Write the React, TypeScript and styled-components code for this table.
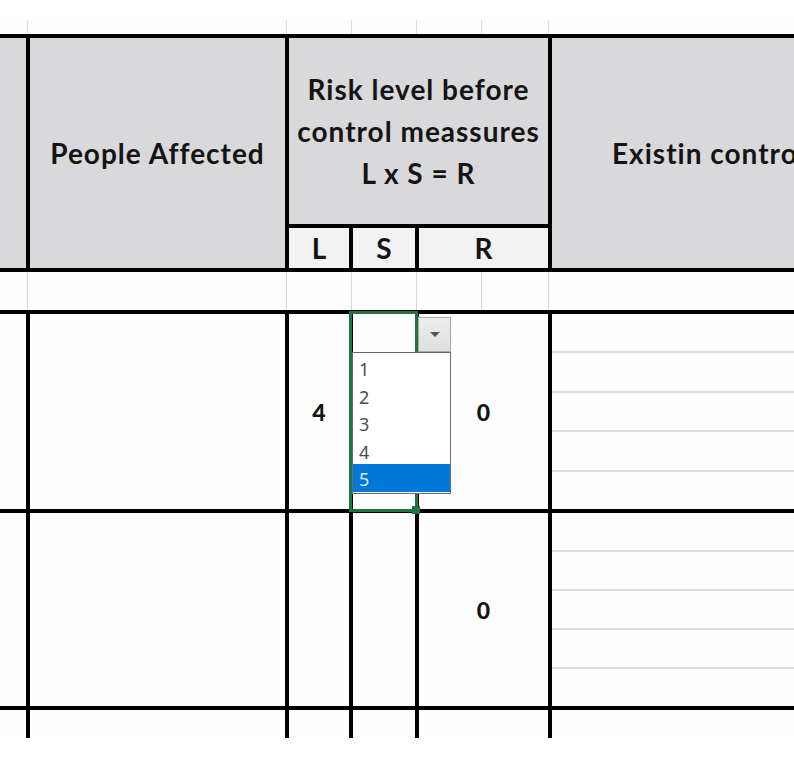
import React from "react";
import styled, { createGlobalStyle } from "styled-components";

const GlobalStyle = createGlobalStyle`
  html, body {
    margin: 0;
    padding: 0;
    background: #ffffff;
    overflow: hidden;
  }
  body {
    font-family: "Lato", "Liberation Sans", sans-serif;
  }
`;

const COLS = "26px 255px 60px 62px 129px 1fr";
const THIN_COLS = "28px 259px 65px 65px 65px 67px 1fr";

const Sheet = styled.div`
  width: 794px;
  height: 773px;
  padding-top: 20px;
  box-sizing: border-box;
  background: #ffffff;
  overflow: hidden;
`;

const ThinRow = styled.div<{ $h: number }>`
  display: grid;
  grid-template-columns: ${THIN_COLS};
  height: ${(p) => p.$h}px;
  background: #fefefe;
`;

const ThinCell = styled.div<{ $fade?: boolean }>`
  border-right: 1px solid ${(p) => (p.$fade ? "#dedede" : "#d6d6d6")};
  &:last-child {
    border-right: none;
  }
`;

const HeaderGrid = styled.div`
  display: grid;
  grid-template-columns: ${COLS};
  grid-template-rows: 186px 40px;
  gap: 4px;
  padding: 4px 0;
  background: #000000;
`;

const HeadCell = styled.div<{
  $col: string;
  $row: string;
  $tone: "dark" | "light";
  $start?: boolean;
}>`
  grid-column: ${(p) => p.$col};
  grid-row: ${(p) => p.$row};
  background: ${(p) => (p.$tone === "dark" ? "#d9d9db" : "#f2f2f3")};
  display: flex;
  align-items: center;
  justify-content: ${(p) => (p.$start ? "flex-start" : "center")};
  padding-left: ${(p) => (p.$start ? "60px" : "0")};
  text-align: center;
  font-family: "Lato", "Liberation Sans", sans-serif;
  font-weight: 700;
  font-size: 28px;
  letter-spacing: ${(p) => (p.$tone === "dark" ? "1px" : "0")};
  color: #141414;
  white-space: nowrap;
  overflow: hidden;
`;

const RiskText = styled.div`
  display: flex;
  flex-direction: column;
  align-items: center;
  line-height: 42px;
`;

const DataGrid = styled.div`
  display: grid;
  grid-template-columns: ${COLS};
  grid-template-rows: 195px 193px 28px;
  gap: 4px;
  padding-top: 4px;
  background: #000000;
`;

const DataCell = styled.div<{ $col: number }>`
  grid-column: ${(p) => p.$col};
  position: relative;
  background: #fefefe;
  display: flex;
  align-items: center;
  justify-content: center;
  font-family: "Lato", "Liberation Sans", sans-serif;
  font-weight: 900;
  font-size: 23px;
  color: #141414;
`;

const NotesCell = styled.div`
  display: flex;
  flex-direction: column;
  background: #fefefe;
`;

const NoteLine = styled.div`
  flex: 1;
  border-bottom: 2px solid #dcdcdc;
  &:last-child {
    border-bottom: none;
  }
`;

const SelectionFrame = styled.div`
  position: absolute;
  left: -4px;
  top: -3px;
  right: -3px;
  bottom: -3px;
  border: 3px solid #217346;
  z-index: 2;
  pointer-events: none;
`;

const FillHandle = styled.div`
  position: absolute;
  right: -5px;
  bottom: -5px;
  width: 8px;
  height: 8px;
  background: #217346;
  z-index: 3;
`;

const DropButton = styled.div`
  position: absolute;
  left: calc(100% + 3px);
  top: 3px;
  width: 33px;
  height: 35px;
  box-sizing: border-box;
  border: 1px solid #a9a9a9;
  background: linear-gradient(#eeeeee, #dedede);
  display: flex;
  align-items: center;
  justify-content: center;
  z-index: 4;
`;

const Caret = styled.span`
  width: 0;
  height: 0;
  border-left: 5px solid transparent;
  border-right: 5px solid transparent;
  border-top: 5px solid #555555;
`;

const DropList = styled.ul`
  position: absolute;
  left: -1px;
  top: 38px;
  width: 99px;
  margin: 0;
  padding: 1px 0;
  list-style: none;
  box-sizing: border-box;
  border: 1px solid #6a6a6a;
  background: #ffffff;
  z-index: 5;
`;

const DropItem = styled.li<{ $active?: boolean }>`
  height: 27.5px;
  line-height: 30px;
  padding-left: 6px;
  font-family: "Noto Sans", "Open Sans", sans-serif;
  font-weight: 400;
  font-size: 18px;
  color: ${(p) => (p.$active ? "#dce9fa" : "#4d4d4d")};
  background: ${(p) => (p.$active ? "#0078d7" : "transparent")};
`;

const options = [1, 2, 3, 4, 5];

export default function App() {
  return (
    <>
      <GlobalStyle />
      <Sheet>
        <ThinRow $h={14}>
          {Array.from({ length: 7 }).map((_, i) => (
            <ThinCell key={i} $fade />
          ))}
        </ThinRow>
        <HeaderGrid>
          <HeadCell $col="1" $row="1 / 3" $tone="dark" />
          <HeadCell $col="2" $row="1 / 3" $tone="dark">
            People Affected
          </HeadCell>
          <HeadCell $col="3 / 6" $row="1" $tone="dark">
            <RiskText>
              <span>Risk level before</span>
              <span>control meassures</span>
              <span>L x S = R</span>
            </RiskText>
          </HeadCell>
          <HeadCell $col="3" $row="2" $tone="light">
            L
          </HeadCell>
          <HeadCell $col="4" $row="2" $tone="light">
            S
          </HeadCell>
          <HeadCell $col="5" $row="2" $tone="light">
            R
          </HeadCell>
          <HeadCell $col="6" $row="1 / 3" $tone="dark" $start>
            Existin control measures
          </HeadCell>
        </HeaderGrid>
        <ThinRow $h={38}>
          {Array.from({ length: 7 }).map((_, i) => (
            <ThinCell key={i} />
          ))}
        </ThinRow>
        <DataGrid>
          <DataCell $col={1} />
          <DataCell $col={2} />
          <DataCell $col={3}>4</DataCell>
          <DataCell $col={4}>
            <SelectionFrame />
            <FillHandle />
            <DropButton>
              <Caret />
            </DropButton>
            <DropList>
              {options.map((o) => (
                <DropItem key={o} $active={o === 5}>
                  {o}
                </DropItem>
              ))}
            </DropList>
          </DataCell>
          <DataCell $col={5}>0</DataCell>
          <NotesCell>
            {options.map((o) => (
              <NoteLine key={o} />
            ))}
          </NotesCell>

          <DataCell $col={1} />
          <DataCell $col={2} />
          <DataCell $col={3} />
          <DataCell $col={4} />
          <DataCell $col={5}>0</DataCell>
          <NotesCell>
            {options.map((o) => (
              <NoteLine key={o} />
            ))}
          </NotesCell>

          <DataCell $col={1} />
          <DataCell $col={2} />
          <DataCell $col={3} />
          <DataCell $col={4} />
          <DataCell $col={5} />
          <DataCell $col={6} />
        </DataGrid>
      </Sheet>
    </>
  );
}
